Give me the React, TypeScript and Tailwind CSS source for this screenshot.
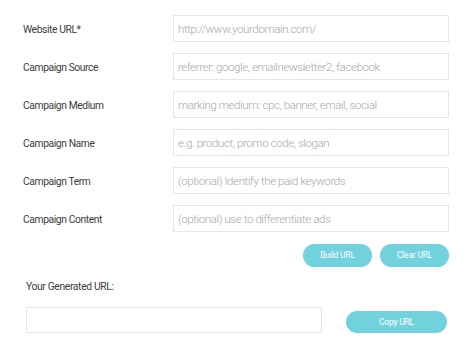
import React from "react";

const fields = [
  { label: "Website URL*", placeholder: "http://www.yourdomain.com/" },
  { label: "Campaign Source", placeholder: "referrer: google, emailnewsletter2, facebook" },
  { label: "Campaign Medium", placeholder: "marking medium: cpc, banner, email, social" },
  { label: "Campaign Name", placeholder: "e.g. product, promo code, slogan" },
  { label: "Campaign Term", placeholder: "(optional) Identify the paid keywords" },
  { label: "Campaign Content", placeholder: "(optional) use to differentiate ads" },
];

const App: React.FC = () => {
  return (
    <div className="w-[474px] h-[362px] bg-white font-['Roboto',sans-serif] text-[#3c3c3c]">
      <div className="pt-[15px] pl-[23px] w-[449px]">
        <div className="flex flex-col gap-[11px]">
          {fields.map((f) => (
            <div key={f.label} className="flex items-center h-[27px]">
              <label className="w-[150px] text-[10.3px] tracking-[-0.4px] pt-[2px]">{f.label}</label>
              <input
                className="flex-1 h-[27px] border border-[#e6e6e6] px-[4px] text-[11.5px] tracking-[-0.4px] font-light text-[#333] placeholder:text-[#a8a8a8] outline-none"
                placeholder={f.placeholder}
              />
            </div>
          ))}
        </div>
        <div className="flex justify-end gap-[8px] mt-[12px]">
          <button className="w-[69px] h-[23px] rounded-full bg-[#71d1dd] text-white text-[8.5px] tracking-[-0.2px]">
            Build URL
          </button>
          <button className="w-[69px] h-[23px] rounded-full bg-[#71d1dd] text-white text-[8.5px] tracking-[-0.2px]">
            Clear URL
          </button>
        </div>
      </div>
      <div className="pl-[26px] w-[447px]">
        <p className="mt-[13px] text-[10.3px] tracking-[-0.35px] h-[14px] leading-[14px]">Your Generated URL:</p>
        <div className="flex items-end justify-between mt-[13px]">
          <input className="w-[296px] h-[26px] border border-[#e6e6e6] px-[4px] text-[12px] outline-none" />
          <button className="w-[101px] h-[22px] rounded-full bg-[#71d1dd] text-white text-[8.5px] tracking-[-0.2px]">
            Copy URL
          </button>
        </div>
      </div>
    </div>
  );
};

export default App;
